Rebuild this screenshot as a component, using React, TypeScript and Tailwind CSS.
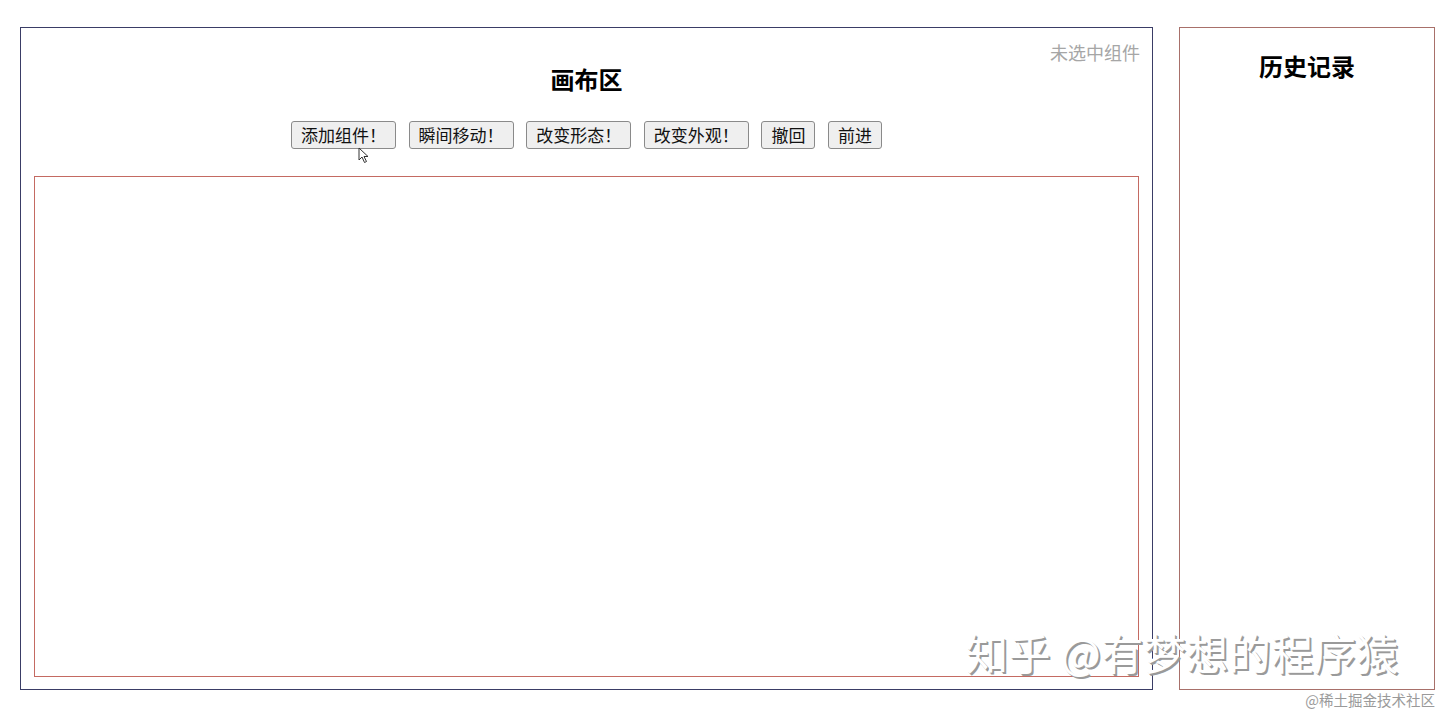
import React from "react";

const font = { fontFamily: '"Noto Sans CJK SC", "Noto Sans", sans-serif' };

const buttons = ["添加组件！", "瞬间移动！", "改变形态！", "改变外观！", "撤回", "前进"];

export default function App() {
  return (
    <div className="relative w-[1440px] h-[713px] bg-white overflow-hidden" style={font}>
      <div className="flex gap-[26px] pt-[27px] pl-[20px]">
        {/* Canvas area */}
        <div className="relative flex flex-col w-[1133px] h-[663px] border border-[#3a3d66] px-[13px] pb-[12px]">
          <div className="absolute top-[11px] right-[12px] text-[18px] leading-[26px] text-[#a6a6a6]">
            未选中组件
          </div>
          <h2 className="mt-[36px] text-center text-[24px] leading-[30px] font-bold text-black">画布区</h2>
          <div className="mt-[27px] flex justify-center gap-[12.6px]">
            {buttons.map((b) => (
              <button
                key={b}
                className="h-[28px] px-[9px] border border-[#8a8a8a] rounded-[3px] bg-[#efefef] text-[17px] leading-[20px] text-[#111]"
              >
                {b}
              </button>
            ))}
          </div>
          <div className="mt-[27px] flex-1 border border-[#c46a62]"></div>
        </div>
        {/* History */}
        <div className="w-[256px] h-[663px] border border-[#a8706a] flex flex-col">
          <h2 className="mt-[23px] text-center text-[24px] leading-[30px] font-bold text-black">历史记录</h2>
        </div>
      </div>

      {/* mouse cursor */}
      <svg className="absolute left-[358px] top-[147px]" width="12" height="17" viewBox="0 0 12 17">
        <path d="M1 1 L1 13 L4 10 L6.5 15.5 L8.5 14.5 L6 9.5 L10 9.5 Z" fill="white" stroke="#333" strokeWidth="1" strokeLinejoin="round" />
      </svg>

      {/* watermarks */}
      <div
        className="absolute left-[966px] top-[625px] text-[42px] leading-[54px] text-white tracking-[0.5px] whitespace-nowrap"
        style={{ textShadow: "2px 2px 0 #9a9a9a, 1px 1px 0 #bdbdbd" }}
      >
        知乎 @有梦想的程序猿
      </div>
      <div className="absolute right-[5px] top-[690px] text-[14.5px] leading-[20px] text-[#9a9a9a] whitespace-nowrap">
        @稀土掘金技术社区
      </div>
    </div>
  );
}
